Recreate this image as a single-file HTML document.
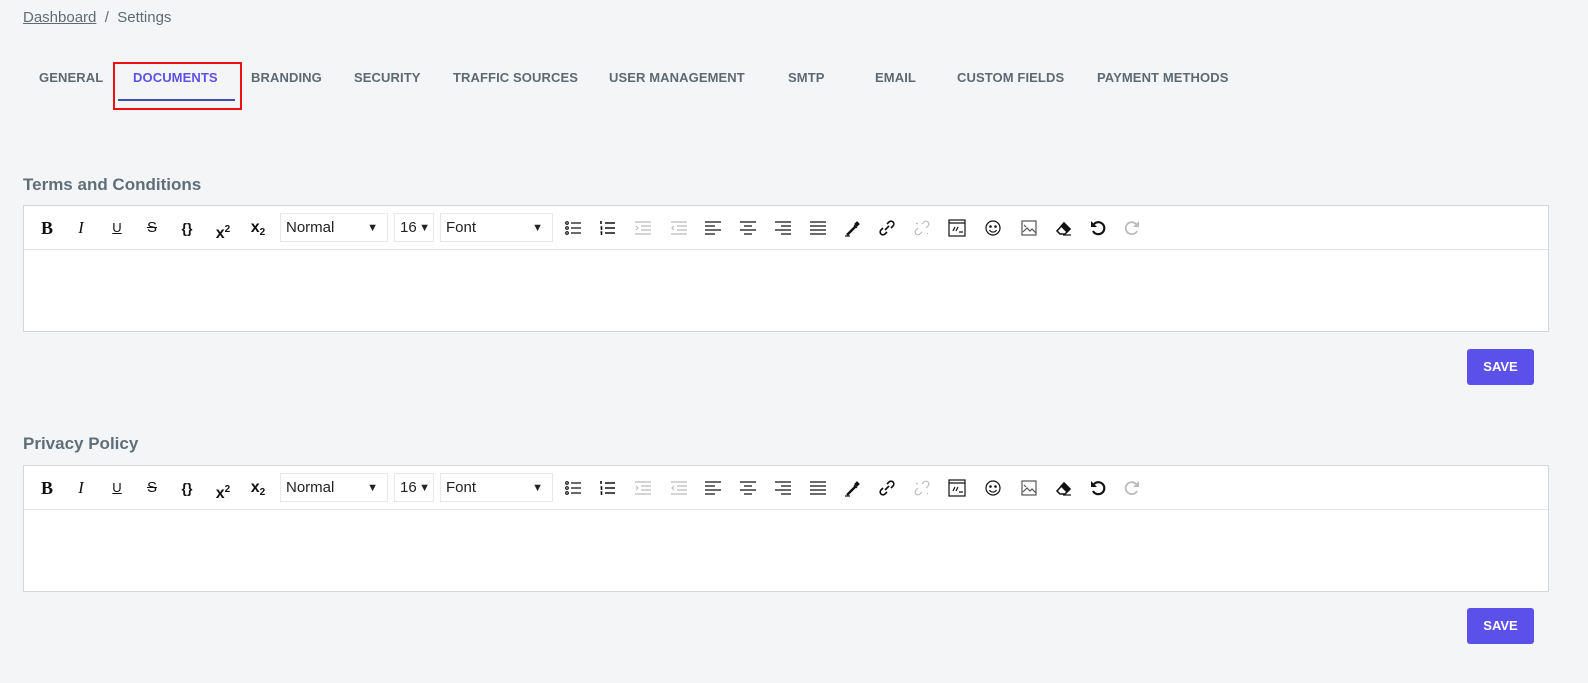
<!DOCTYPE html><html><head><meta charset="utf-8"><style>
body{margin:0;background:#f4f5f7;font-family:"Liberation Sans",sans-serif;width:1588px;height:683px;position:relative;overflow:hidden}
.a{position:absolute}
.crumb{left:23px;top:9px;font-size:15px;color:#5f6b74}
.crumb u{color:#5f6b74}
.tab{position:absolute;top:70px;font-size:13px;font-weight:bold;color:#5d6a74;letter-spacing:.1px}
.h{position:absolute;left:23px;font-size:17px;font-weight:bold;color:#5f6f7a}
.ed{position:absolute;left:23px;width:1526px;height:127px;background:#fff;border:1px solid #d3d6da;box-sizing:border-box}
.tb{position:absolute;left:0;top:0;right:0;height:43px;border-bottom:1px solid #e3e5e8}
.ic{position:absolute;top:12px;width:20px;height:20px;text-align:center;line-height:20px;font-size:15px;color:#111}
.sel{position:absolute;top:7px;height:29px;border:1px solid #e6e8ea;box-sizing:border-box;font-size:15px;color:#222;line-height:28px;padding-left:5px}
.sel span{position:absolute;right:9px;top:0;font-size:11px}
.save{position:absolute;left:1467px;width:67px;height:36px;background:#5b50ea;color:#fff;border-radius:3px;font-size:13px;font-weight:bold;text-align:center;line-height:36px}
svg{display:block}
</style></head><body>
<div class="a crumb"><u>Dashboard</u> &nbsp;/&nbsp; Settings</div>
<div class="tab" style="left:39px">GENERAL</div>
<div class="tab" style="left:133px;color:#5b52e8">DOCUMENTS</div>
<div class="a" style="left:118px;top:99px;width:117px;height:2px;background:#3f4fb0"></div>
<div class="a" style="left:113px;top:62px;width:125px;height:44px;border:2px solid #ee1111"></div>
<div class="tab" style="left:251px">BRANDING</div>
<div class="tab" style="left:354px">SECURITY</div>
<div class="tab" style="left:453px">TRAFFIC SOURCES</div>
<div class="tab" style="left:609px">USER MANAGEMENT</div>
<div class="tab" style="left:788px">SMTP</div>
<div class="tab" style="left:875px">EMAIL</div>
<div class="tab" style="left:957px">CUSTOM FIELDS</div>
<div class="tab" style="left:1097px">PAYMENT METHODS</div>

<div class="h" style="top:175px">Terms and Conditions</div>
<div class="ed" style="top:205px"><div class="tb"></div></div>
<div class="save" style="top:349px">SAVE</div>

<div class="h" style="top:434px">Privacy Policy</div>
<div class="ed" style="top:465px"><div class="tb"></div></div>
<div class="save" style="top:608px">SAVE</div>
<script>
var T=`<div class="ic" style="left:13px;font-weight:bold;font-family:'Liberation Serif',serif;font-size:18px">B</div>
<div class="ic" style="left:47px;font-style:italic;font-family:'Liberation Serif',serif;font-size:17px">I</div>
<div class="ic" style="left:83px;text-decoration:underline;font-size:13px">U</div>
<div class="ic" style="left:118px;text-decoration:line-through;font-size:15px">S</div>
<div class="ic" style="left:153px;font-size:14px;font-weight:bold">{}</div>
<div class="ic" style="left:186px;width:26px;font-weight:bold;font-size:16px;line-height:24px">x<span style="font-size:10px;vertical-align:6px">2</span></div>
<div class="ic" style="left:221px;width:26px;font-weight:bold;font-size:16px;line-height:20px">x<span style="font-size:10px;vertical-align:-3px">2</span></div>
<div class="sel" style="left:256px;width:108px">Normal<span>▼</span></div>
<div class="sel" style="left:370px;width:40px">16<span style="right:3px">▼</span></div>
<div class="sel" style="left:416px;width:113px">Font<span>▼</span></div>`;
var g=[
['#111','<circle cx="3" cy="5" r="1.3"/><circle cx="3" cy="10" r="1.3"/><circle cx="3" cy="15" r="1.3"/><path d="M7 5h10M7 10h10M7 15h10"/>'],
['#111','<path d="M3 3v3M2.5 9h1v3M2.5 14h1v3M7 5h10M7 10h10M7 15h10" stroke-width="1.6"/>'],
['#bbb','<path d="M2 4h16M8 8h10M8 12h10M2 16h16M3 8l2 2-2 2"/>'],
['#bbb','<path d="M2 4h16M8 8h10M8 12h10M2 16h16M5 8l-2 2 2 2"/>'],
['#111','<path d="M2 4h16M2 8h10M2 12h16M2 16h10"/>'],
['#111','<path d="M2 4h16M6 8h8M2 12h16M6 16h8"/>'],
['#111','<path d="M2 4h16M8 8h10M2 12h16M8 16h10"/>'],
['#111','<path d="M2 4h16M2 8h16M2 12h16M2 16h16"/>'],
['#111','<path d="M4 17l9-9" stroke-width="2.5"/><path d="M12 6l2-2 2 2-2 2z" fill="#111"/><path d="M11 7l3 3"/><path d="M2 18h5"/>'],
['#111','<path d="M8 12l4-4M6 10l-2 2a2.5 2.5 0 0 0 4 4l2-2M14 10l2-2a2.5 2.5 0 0 0-4-4l-2 2" stroke-width="1.6"/>'],
['#bbb','<path d="M6 10l-2 2a2.5 2.5 0 0 0 4 4l2-2M14 10l2-2a2.5 2.5 0 0 0-4-4l-2 2M4 5l2 1M15 15l1 1"/>'],
['#111','<rect x="2" y="2" width="16" height="16"/><path d="M2 5h16M6 13l2-4M9 13l2-4M12 14h4"/>'],
['#111','<circle cx="10" cy="10" r="7"/><circle cx="7.5" cy="8.5" r=".7" fill="#111"/><circle cx="12.5" cy="8.5" r=".7" fill="#111"/><path d="M6.5 12a4 4 0 0 0 7 0"/>'],
['#555','<rect x="3" y="3" width="14" height="14"/><path d="M4 14l4-4 3 3 2-2 4 4M5 7l2 2"/>'],
['#111','<path d="M3 13l7-8 6 6-5 5H6z" stroke-width="1.5"/><path d="M10 5l6 6-3 3-6-6z" fill="#111"/><path d="M9 17h8"/>'],
['#111','<path d="M6 6a6 6 0 1 1-1 7" stroke-width="2.2"/><path d="M3 3v6h6z" fill="#111" stroke="none"/>'],
['#bbb','<path d="M14 6a6 6 0 1 0 1 7" stroke-width="1.8"/><path d="M17 3v6h-6z" fill="#bbb" stroke="none"/>']
];
var xs=[540,574,609,645,679,714,749,784,819,853,888,923,959,995,1030,1064,1098];
g.forEach(function(p,i){T+='<div class="ic" style="left:'+xs[i]+'px"><svg width="20" height="20" viewBox="0 0 20 20" stroke="'+p[0]+'" fill="none" stroke-width="1.2">'+p[1]+'</svg></div>';});
document.querySelectorAll('.tb').forEach(function(e){e.innerHTML=T;});
</script>
</body></html>
